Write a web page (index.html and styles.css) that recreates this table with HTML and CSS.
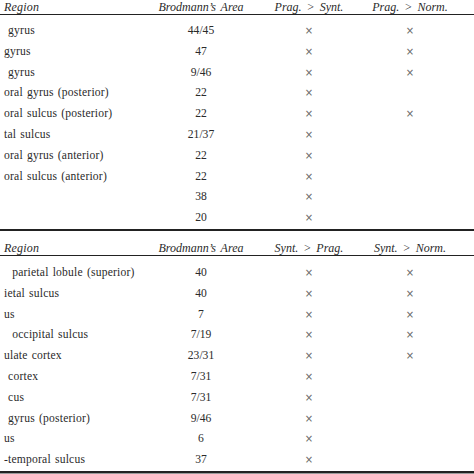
FILE: index.html
```html
<!DOCTYPE html>
<html>
<head>
<meta charset="utf-8">
<link rel="stylesheet" href="styles.css">
</head>
<body>
<div class="page">
  <table class="tbl first">
    <colgroup><col class="c1"><col class="c2"><col class="c3"><col class="c4"><col></colgroup>
    <thead>
      <tr class="head"><th class="reg">Region</th><th>Brodmann’s Area</th><th>Prag. &gt; Synt.</th><th>Prag. &gt; Norm.</th><th></th></tr>
    </thead>
    <tbody>
      <tr class="top"><td class="reg">&nbsp;gyrus</td><td>44/45</td><td class="x">×</td><td class="x">×</td><td></td></tr>
      <tr><td class="reg">gyrus</td><td>47</td><td class="x">×</td><td class="x">×</td><td></td></tr>
      <tr><td class="reg">&nbsp;gyrus</td><td>9/46</td><td class="x">×</td><td class="x">×</td><td></td></tr>
      <tr><td class="reg">oral gyrus (posterior)</td><td>22</td><td class="x">×</td><td></td><td></td></tr>
      <tr><td class="reg">oral sulcus (posterior)</td><td>22</td><td class="x">×</td><td class="x">×</td><td></td></tr>
      <tr><td class="reg">tal sulcus</td><td>21/37</td><td class="x">×</td><td></td><td></td></tr>
      <tr><td class="reg">oral gyrus (anterior)</td><td>22</td><td class="x">×</td><td></td><td></td></tr>
      <tr><td class="reg">oral sulcus (anterior)</td><td>22</td><td class="x">×</td><td></td><td></td></tr>
      <tr><td class="reg"></td><td>38</td><td class="x">×</td><td></td><td></td></tr>
      <tr><td class="reg"></td><td>20</td><td class="x">×</td><td></td><td></td></tr>
    </tbody>
  </table>
  <table class="tbl second">
    <colgroup><col class="c1"><col class="c2"><col class="c3"><col class="c4"><col></colgroup>
    <thead>
      <tr class="head"><th class="reg">Region</th><th>Brodmann’s Area</th><th>Synt. &gt; Prag.</th><th>Synt. &gt; Norm.</th><th></th></tr>
    </thead>
    <tbody>
      <tr class="top"><td class="reg">&nbsp;&nbsp;parietal lobule (superior)</td><td>40</td><td class="x">×</td><td class="x">×</td><td></td></tr>
      <tr><td class="reg">ietal sulcus</td><td>40</td><td class="x">×</td><td class="x">×</td><td></td></tr>
      <tr><td class="reg">us</td><td>7</td><td class="x">×</td><td class="x">×</td><td></td></tr>
      <tr><td class="reg">&nbsp;&nbsp;occipital sulcus</td><td>7/19</td><td class="x">×</td><td class="x">×</td><td></td></tr>
      <tr><td class="reg">ulate cortex</td><td>23/31</td><td class="x">×</td><td class="x">×</td><td></td></tr>
      <tr><td class="reg">&nbsp;cortex</td><td>7/31</td><td class="x">×</td><td></td><td></td></tr>
      <tr><td class="reg">&nbsp;cus</td><td>7/31</td><td class="x">×</td><td></td><td></td></tr>
      <tr><td class="reg">&nbsp;gyrus (posterior)</td><td>9/46</td><td class="x">×</td><td></td><td></td></tr>
      <tr><td class="reg">us</td><td>6</td><td class="x">×</td><td></td><td></td></tr>
      <tr><td class="reg">-temporal sulcus</td><td>37</td><td class="x">×</td><td></td><td></td></tr>
    </tbody>
  </table>
  <div class="edge"></div>
</div>
</body>
</html>
```
FILE: styles.css
```css
html, body {
  margin: 0;
  padding: 0;
  background: #ffffff;
}
.page {
  width: 474px;
  height: 474px;
  overflow: hidden;
  font-family: "Liberation Serif", "Times New Roman", serif;
  color: #2a2a2a;
}
.tbl {
  width: 474px;
  border-collapse: collapse;
  table-layout: fixed;
}
.c1 { width: 155px; }
.c2 { width: 92px; }
.c3 { width: 124px; }
.c4 { width: 78px; }
.tbl th {
  font-weight: normal;
  font-style: italic;
  font-size: 12px;
  text-align: center;
  padding: 0;
  white-space: nowrap;
  color: #2a2a2a;
  word-spacing: 2px;
}
.tbl td {
  font-size: 11.6px;
  text-align: center;
  padding: 0;
  height: 20.8px;
  line-height: 20.8px;
  white-space: nowrap;
  overflow: hidden;
}
.tbl .reg {
  text-align: left;
  padding-left: 4px;
  letter-spacing: 0.2px;
  word-spacing: 1px;
}
.tbl td.x {
  font-size: 10px;
  color: #666666;
  font-family: "DejaVu Sans", sans-serif;
}
.first .head th {
  height: 14px;
  line-height: 14px;
  border-bottom: 1.5px solid #222;
}
.first tbody tr:last-child td {
  border-bottom: 2px solid #222;
}
.first tr.top td {
  padding-top: 6px;
}
.second .head th {
  height: 14px;
  line-height: 14px;
  padding-top: 10px;
  border-bottom: 1.5px solid #222;
}
.second tr.top td {
  padding-top: 7px;
}
.second tbody tr:last-child td {
  border-bottom: 2px solid #222;
}
.edge {
  height: 4px;
  background: #9a9a9a;
}
```
